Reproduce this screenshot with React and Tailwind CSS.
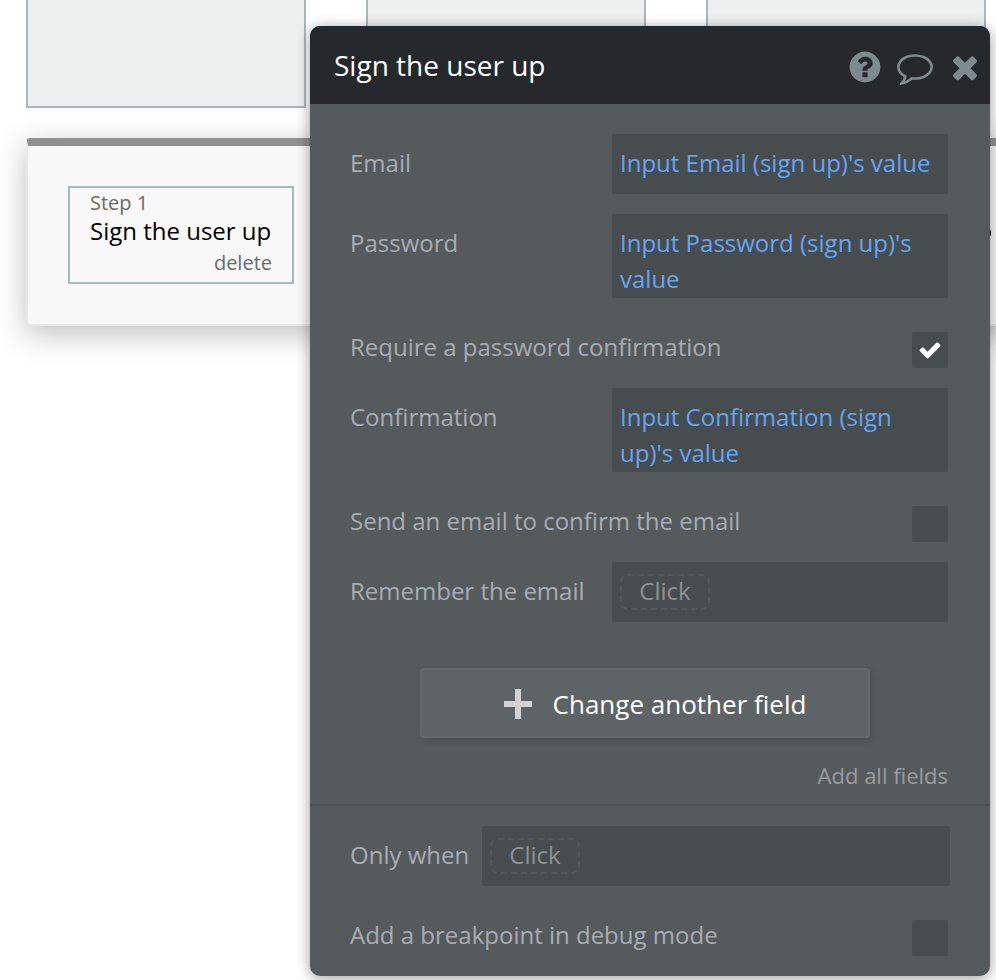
const ICONS = {
    help: "M1024 1376v-192q0-14-9-23t-23-9h-192q-14 0-23 9t-9 23v192q0 14 9 23t23 9h192q14 0 23-9t9-23zM1280 704q0-88-55.5-163t-138.5-116-170-41q-243 0-371 213-15 24 8 42l132 100q7 6 19 6 16 0 25-12 53-68 86-92 34-24 86-24 48 0 85.5 26t37.5 59q0 38-20 61t-68 45q-63 28-115.5 86.500t-52.5 125.500v36q0 14 9 23t23 9h192q14 0 23-9t9-23q0-19 21.500-49.500t54.5-49.500q32-18 49-28.500t46-35 44.500-48 28-60.500 12.500-81zM1664 896q0 209-103 385.500t-279.500 279.500-385.500 103-385.500-103-279.500-279.500-103-385.500 103-385.500 279.500-279.500 385.500-103 385.500 103 279.500 279.500 103 385.500z",
    comment: "M896 384q-204 0-381.5 69.500t-282 187.500-104.500 255q0 112 71.500 213.500t201.500 175.500l87 50-27 96q-24 91-70 172 152-63 275-171l43-38 57 6q69 8 130 8 204 0 381.500-69.500t282-187.500 104.500-255-104.500-255-282-187.500-381.500-69.500zM1792 896q0 174-120 321.500t-326 233-450 85.500q-70 0-145-8-198 175-460 242-49 14-114 22h-5q-15 0-27-10.500t-16-27.500v-1q-3-4-.5-12t2-10 4.500-9.500l6-9 7-8.500 8-9q7-8 31-34.500t34.500-38 31-39.500 32.500-51 27-59 26-76q-157-89-247.500-220t-90.500-281q0-174 120-321.500t326-233 450-85.500 450 85.500 326 233 120 321.500z",
    close: "M1490 1322q0 40-28 68l-136 136q-28 28-68 28t-68-28l-294-294-294 294q-28 28-68 28t-68-28l-136-136q-28-28-28-68t28-68l294-294-294-294q-28-28-28-68t28-68l136-136q28-28 68-28t68 28l294 294 294-294q28-28 68-28t68 28l136 136q28 28 28 68t-28 68l-294 294 294 294q28 28 28 68z",
    check: "M1671 566q0 40-28 68l-724 724-136 136q-28 28-68 28t-68-28l-136-136-362-362q-28-28-28-68t28-68l136-136q28-28 68-28t68 28l294 295 656-657q28-28 68-28t68 28l136 136q28 28 28 68z",
};

function Icon({ name, className }) {
    return (
        <svg viewBox="0 0 1792 1792" fill="currentColor" className={className}>
            <path d={ICONS[name]} />
        </svg>
    );
}

function Row({ label, className = "", children }) {
    return (
        <div className={`flex items-start justify-between ${className}`}>
            <span className="pt-[11px] leading-9 whitespace-nowrap">{label}</span>
            {children}
        </div>
    );
}

// the second line of a long value sits tight against the bottom edge
function Field({ children }) {
    return (
        <div className="min-h-[60px] w-[336px] shrink-0 rounded-[2px] bg-[#474c4e] px-2 pt-[11px] pb-px leading-9 text-[#64a6f4]">{children}</div>
    );
}

function ClickChip() {
    return (
        <span className="flex h-9 w-[90px] items-center justify-center rounded-lg border-2 border-dashed border-[#54585a] pb-0.5 text-[#919191]">Click</span>
    );
}

function CheckRow({ label, checked, className = "" }) {
    return (
        <div className={`flex h-9 items-center justify-between ${className}`}>
            <span className="-mt-1.5">{label}</span>
            <span className="flex size-9 items-center justify-center rounded-[2px] bg-[#474c4e] text-white">
                {checked && <Icon name="check" className="size-6" />}
            </span>
        </div>
    );
}

function WorkflowCanvas() {
    return (
        <div className="w-[1100px]">
            <div className="flex h-[108px] gap-[60px] pl-[26px]">
                <div className="w-[280px] border-2 border-t-0 border-[#a9b6ba] bg-[#eef0f0]" />
                <div className="w-[280px] border-2 border-t-0 border-[#a9b6ba] bg-[#eef0f0]" />
                <div className="w-[280px] border-2 border-t-0 border-[#a9b6ba] bg-[#eef0f0]" />
            </div>
            <div className="mt-[30px] ml-[26px] h-[188px] rounded-[4px] border-2 border-t-8 border-[#e8e8e8] border-t-[#919191] bg-[#f8f8f8] pt-10 pl-10 shadow-[0_8px_30px_rgba(0,0,0,0.25)]">
                <div className="flex h-[98px] w-[226px] flex-col border-2 border-[#a9b6ba] px-5 text-black">
                    <span className="text-xl leading-[30px] text-[#6b6b6b]">Step 1</span>
                    <span className="text-2xl leading-[26px] whitespace-nowrap">Sign the user up</span>
                    <span className="text-right text-xl leading-[38px] text-[#6b6b6b]">delete</span>
                </div>
            </div>
        </div>
    );
}

export default function App() {
    return (
        <div className="relative h-[980px] w-[996px] overflow-hidden bg-white font-['Open_Sans',sans-serif]">
            <WorkflowCanvas />
            {/* end of the next step's title, mostly behind the panel */}
            <span className="absolute top-[229px] left-[985px] h-2 w-1.5 rounded-full bg-black" />

            <div className="absolute top-[26px] left-[310px] h-[950px] w-[680px] overflow-hidden rounded-[10px] bg-[#555a5c] text-2xl text-[#a8adb3] shadow-[0_2px_14px_rgba(0,0,0,0.4)]">
                <div className="flex h-[78px] items-center bg-[#25292b] pl-6 text-[#7f8a8f]">
                    <h1 className="grow pt-0.5 text-[28px] text-white">Sign the user up</h1>
                    <Icon name="help" className="mt-1 size-9" />
                    <Icon name="comment" className="mt-1 ml-3.5 size-9" />
                    <Icon name="close" className="mt-1 mr-[7px] ml-3.5 size-9" />
                </div>

                <div className="pt-[30px] pr-[42px] pl-10">
                    <Row label="Email">
                        <Field>Input Email (sign up)'s value</Field>
                    </Row>
                    <Row label="Password" className="mt-5">
                        <Field>Input Password (sign up)'s value</Field>
                    </Row>
                    <CheckRow label="Require a password confirmation" checked className="mt-[34px]" />
                    <Row label="Confirmation" className="mt-5">
                        <Field>Input Confirmation (sign up)'s value</Field>
                    </Row>
                    <CheckRow label="Send an email to confirm the email" className="mt-[34px]" />
                    <Row label="Remember the email" className="mt-5">
                        <Field><div className="pt-px"><ClickChip /></div></Field>
                    </Row>
                    <button className="mt-[46px] ml-[70px] flex h-[70px] w-[450px] items-center justify-center rounded-[4px] border-2 border-[#65696c] bg-[#5e6366] pt-0.5 pl-5 text-[26px] text-white shadow-[2px_3px_6px_rgba(0,0,0,0.12)]">
                        <svg viewBox="0 0 28 30" className="mr-[21px] h-[30px] w-7 fill-[#d2d2d2]">
                            <path d="M11 0h6v12h11v6H17v12h-6V18H0v-6h11z" />
                        </svg>
                        Change another field
                    </button>
                    <div className="mt-[21px] text-right text-[22px] leading-8 text-[#9a9c9e]">Add all fields</div>
                </div>

                <div className="mt-[13px] border-t-2 border-[#4c5053] pt-5 pr-10 pl-10">
                    <Row label="Only when">
                        <div className="h-[60px] w-[468px] rounded-[2px] bg-[#474c4e] px-2 py-3"><ClickChip /></div>
                    </Row>
                    <CheckRow label="Add a breakpoint in debug mode" className="mt-[34px] mr-0.5" />
                </div>
            </div>
        </div>
    );
}
